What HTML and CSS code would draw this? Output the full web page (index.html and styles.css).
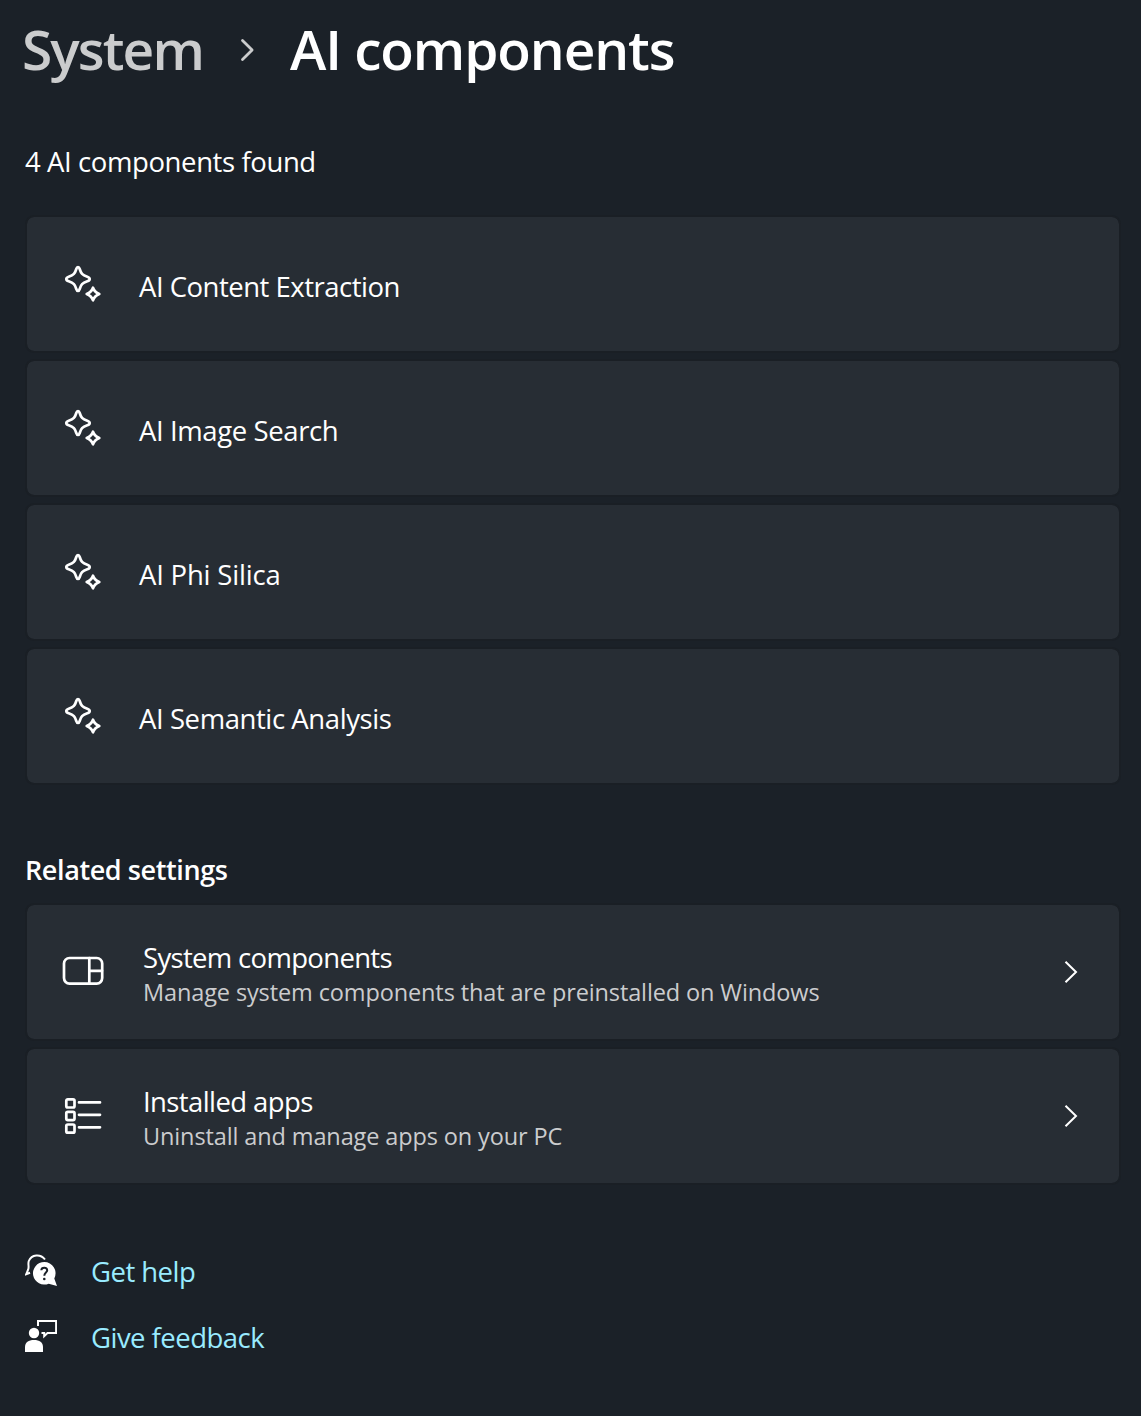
FILE: index.html
```
<!DOCTYPE html>
<html lang="en">
<head>
    <meta charset="UTF-8">
    <meta name="viewport" content="width=device-width, initial-scale=1.0">
    <title>AI components</title>
    <link rel="stylesheet" href="styles.css">
</head>
<body>

    <!-- Shared sparkle icon -->
    <svg class="sprite" width="0" height="0">
        <symbol id="sparkle" viewBox="0 0 40 40">
            <path d="M15 3.200C16 3.200 16.400 4 16.700 5C18 9.300 19.200 11 24.300 12.700C25.500 13.100 26.700 13.800 26.700 15C26.700 16.200 25.500 16.900 24.300 17.300C19.200 19 18 20.700 16.700 25C16.400 26 16 26.800 15 26.800C14 26.800 13.600 26 13.300 25C12 20.700 10.800 19 5.700 17.300C4.500 16.900 3.300 16.200 3.300 15C3.300 13.800 4.500 13.100 5.700 12.700C10.800 11 12 9.300 13.300 5C13.600 4 14 3.200 15 3.200Z"/>
            <path d="M30 23.700C31 26.600 32.200 28.400 36.300 30C32.200 31.600 31 33.400 30 36.300C29 33.400 27.800 31.600 23.700 30C27.800 28.400 29 26.600 30 23.700Z"/>
        </symbol>
    </svg>

    <main class="page">

        <!-- Breadcrumb -->
        <header class="breadcrumb">
            <span class="crumb-parent">System</span>
            <svg class="crumb-arrow" viewBox="0 0 16 26"><path d="M3.500 3.500L13.100 13L3.500 22.500"/></svg>
            <h1>AI components</h1>
        </header>

        <p class="count">4 AI components found</p>

        <!-- Component list -->
        <div class="cards">
            <div class="card">
                <svg class="card-icon"><use href="#sparkle"/></svg>
                <span class="card-title name-extraction">AI Content Extraction</span>
            </div>
            <div class="card">
                <svg class="card-icon"><use href="#sparkle"/></svg>
                <span class="card-title name-image">AI Image Search</span>
            </div>
            <div class="card">
                <svg class="card-icon"><use href="#sparkle"/></svg>
                <span class="card-title name-phi">AI Phi Silica</span>
            </div>
            <div class="card">
                <svg class="card-icon"><use href="#sparkle"/></svg>
                <span class="card-title name-semantic">AI Semantic Analysis</span>
            </div>
        </div>

        <!-- Related settings -->
        <h2>Related settings</h2>
        <div class="cards">
            <div class="card card-link">
                <svg class="card-icon" viewBox="0 0 44 40">
                    <rect x="3" y="6" width="38.200" height="25.600" rx="5.500"/>
                    <path d="M28.300 6V31.500M28.300 18.800H41"/>
                </svg>
                <div class="card-text">
                    <span class="card-title name-system">System components</span>
                    <span class="card-desc desc-system">Manage system components that are preinstalled on Windows</span>
                </div>
                <svg class="card-arrow" viewBox="0 0 14 24"><path d="M1.500 1.700L12 12L1.500 22.300"/></svg>
            </div>
            <div class="card card-link">
                <svg class="card-icon" viewBox="0 0 44 40">
                    <rect x="5.300" y="3.300" width="8.200" height="8.200" rx="1.500"/>
                    <rect x="5.300" y="15.900" width="8.200" height="8.200" rx="1.500"/>
                    <rect x="5.300" y="28.500" width="8.200" height="8.200" rx="1.500"/>
                    <path d="M18 6.400H39M18 18.800H39M18 31.300H39"/>
                </svg>
                <div class="card-text">
                    <span class="card-title name-apps">Installed apps</span>
                    <span class="card-desc desc-apps">Uninstall and manage apps on your PC</span>
                </div>
                <svg class="card-arrow" viewBox="0 0 14 24"><path d="M1.500 1.700L12 12L1.500 22.300"/></svg>
            </div>
        </div>

        <!-- Help links -->
        <div class="links">
            <div class="link-row">
                <svg class="link-icon" viewBox="0 0 32 32">
                    <path class="line" d="M20 5.500C15.500-.5 6.500.2 3.800 7C2.700 10 4.300 12.500 3.200 15.500L1.200 20.300L5 18.800"/>
                    <path class="fill" d="M19.300 8A11.300 11.300 0 1 0 23.700 29.700L32 32L29.300 24.500A11.300 11.300 0 0 0 19.300 8Z"/>
                    <path class="mark" d="M16.300 16.200C16.500 12.900 22.300 12.900 22.200 16.300C22.200 18.600 19.300 18.700 19.300 21.800"/>
                    <circle class="dot" cx="19.300" cy="25" r="1.300"/>
                </svg>
                <a class="link-help">Get help</a>
            </div>
            <div class="link-row">
                <svg class="link-icon" viewBox="0 0 32 32">
                    <circle class="fill" cx="9" cy="13" r="5.200"/>
                    <path class="fill" d="M0 32V27C0 22.500 3.500 20 9 20S18 22.500 18 27V32Z"/>
                    <path class="line" d="M13 6V.9H31.100V13H22.500L19.200 16.200V13H16.500"/>
                </svg>
                <a class="link-feedback">Give feedback</a>
            </div>
        </div>
    </main>

</body>
</html>
```
FILE: styles.css
```
/* Global Styles */
body {
    margin: 0;
    min-height: 1416px;
    background: #1b2128;
    color: #fff;
    font-family: 'Open Sans', 'Noto Sans', sans-serif;
    font-size: 27.5px;
    overflow: hidden;
}

.sprite {
    display: block;
}

.page {
    padding: 0 20px 0 25px;
}

/* Breadcrumb */
.breadcrumb {
    display: flex;
    align-items: center;
    height: 100px;
    margin-left: -3px;
    font-size: 55px;
    font-weight: 600;
    line-height: 97px;
}

.crumb-parent {
    width: 217px;
    height: 100px;
    color: #cbcccd;
    letter-spacing: -1.9px;
}

.crumb-arrow {
    width: 16px;
    height: 26px;
    margin-right: 35px;
    fill: none;
    stroke: #cbcccd;
    stroke-width: 2.8;
    stroke-linecap: round;
    stroke-linejoin: round;
}

h1 {
    height: 100px;
    margin: 0;
    font-size: inherit;
    font-weight: inherit;
    letter-spacing: -1.1px;
    white-space: nowrap;
}

.count {
    margin: 42px 0 33px;
    letter-spacing: -0.4px;
    line-height: 40px;
}

/* Cards */
.cards {
    display: flex;
    flex-direction: column;
    gap: 6px;
}

.card {
    display: flex;
    align-items: center;
    box-sizing: border-box;
    height: 138px;
    padding-left: 34px;
    border: 2px solid #1a1f25;
    border-radius: 9px;
    background: #272d34;
    background-clip: padding-box;
}

.card-icon {
    width: 44px;
    height: 40px;
    margin-right: 34px;
    fill: none;
    stroke: #fff;
    stroke-width: 2.7;
    stroke-linecap: round;
    stroke-linejoin: round;
}

.card-title {
    line-height: 36px;
    padding-top: 5px;
    white-space: nowrap;
}

.card-text {
    display: flex;
    flex: 1;
    flex-direction: column;
    padding: 2px 0 0 4px;
}

.card-text .card-title {
    padding-top: 2px;
}

.card-desc {
    color: #cbccce;
    font-size: 23.500px;
    line-height: 32px;
    white-space: nowrap;
}

/* Optical tracking per label */
.name-extraction {
    letter-spacing: -0.5px;
}

.name-image {
    letter-spacing: -0.4px;
}

.name-phi {
    letter-spacing: -0.2px;
}

.name-semantic {
    letter-spacing: -0.42px;
}

.name-system {
    letter-spacing: -0.68px;
}

.name-apps {
    letter-spacing: -0.6px;
}

.desc-system,
.desc-apps {
    letter-spacing: -0.12px;
}

.link-help,
.link-feedback {
    letter-spacing: -0.53px;
}

.card-arrow {
    width: 14px;
    height: 24px;
    margin-right: 41px;
    fill: none;
    stroke: #fff;
    stroke-width: 2;
}

h2 {
    margin: 65px 0 13px;
    font-size: 27px;
    font-weight: 600;
    letter-spacing: -0.4px;
    line-height: 40px;
}

/* Help links */
.links {
    display: flex;
    flex-direction: column;
    gap: 26px;
    margin-top: 66px;
}

.link-row {
    display: flex;
    align-items: center;
    height: 40px;
    color: #99ebff;
}

.link-icon {
    width: 32px;
    height: 32px;
    margin: -3px 34px 0 0;
}

.link-icon .fill {
    fill: #fff;
}

.link-icon .line {
    fill: none;
    stroke: #fff;
    stroke-width: 2;
}

.link-icon .mark {
    fill: none;
    stroke: #1b2128;
    stroke-width: 2;
}

.link-icon .dot {
    fill: #1b2128;
}
```
